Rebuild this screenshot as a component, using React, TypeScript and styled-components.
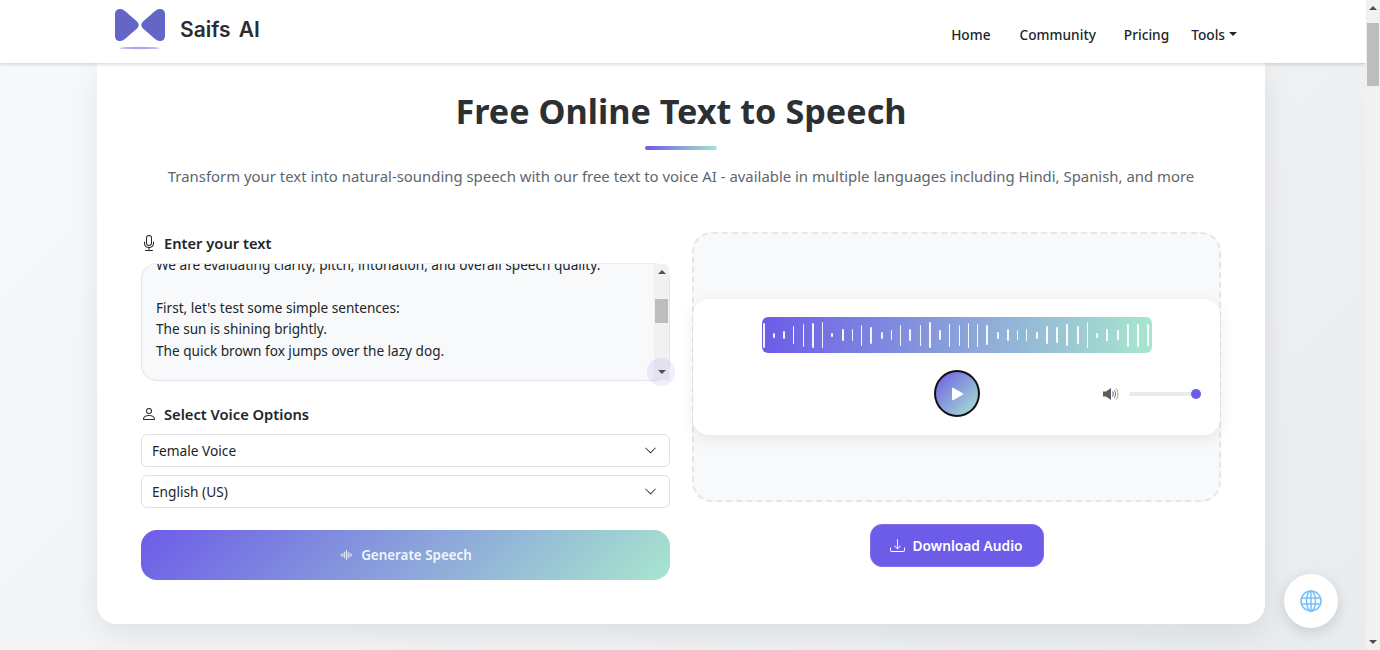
import React from 'react';
import styled, { createGlobalStyle } from 'styled-components';
import { BsChevronDown, BsDownload, BsMic, BsPerson, BsSoundwave } from 'react-icons/bs';

const BARS: [number, number][] = [
  [25, 2], [5, 2], [8, 2], [18, 1], [23, 1], [25, 2], [26, 1], [4, 2], [12, 2], [12, 1],
  [21, 1], [17, 2], [7, 2], [10, 1], [21, 1], [12, 2], [21, 1], [26, 2], [10, 2], [23, 1],
  [21, 1], [25, 1], [23, 1], [20, 2], [7, 2], [12, 2], [10, 1], [12, 1], [7, 2], [18, 2],
  [16, 2], [22, 2], [18, 2], [26, 1], [5, 2], [12, 2], [10, 2], [23, 2], [23, 2], [22, 2],
];

const GlobalStyle = createGlobalStyle`
  html, body { margin: 0; height: 100%; overflow: hidden; }
  body { font-family: "Noto Sans", "Open Sans", Arial, sans-serif; color: #212529; }
  * { box-sizing: border-box; }
`;

const Viewport = styled.div`
  display: flex;
  width: 1380px;
  height: 650px;
  overflow: hidden;
`;

const Page = styled.div`
  flex: 1;
  min-width: 0;
  display: flex;
  flex-direction: column;
  background: linear-gradient(135deg, #f8f9fa 0%, #e9ecef 100%);
`;

const Header = styled.header`
  height: 63px;
  flex: none;
  display: flex;
  align-items: flex-start;
  justify-content: space-between;
  padding: 0 129px 0 114px;
  background: #fff;
  box-shadow: 0 1px 4px rgba(0, 0, 0, 0.18);
  position: relative;
  z-index: 2;
`;

const Brand = styled.div`
  display: flex;
  align-items: center;
  gap: 12px;
  height: 52px;
  margin-top: 3px;
`;

const BrandName = styled.span`
  font-family: Inter, sans-serif;
  font-size: 21px;
  font-weight: 600;
  word-spacing: 3px;
  color: #2b2d33;
`;

const Nav = styled.nav`
  display: flex;
  align-items: center;
  height: 24px;
  margin-top: 22px;
`;

const NavLink = styled.a<{ $gap: number }>`
  font-size: 13.7px;
  font-weight: 500;
  color: #212529;
  margin-right: ${(p) => p.$gap}px;
  display: flex;
  align-items: center;
  white-space: nowrap;
`;

const Caret = styled.span`
  margin-left: 4px;
  width: 0;
  height: 0;
  border-top: 4.5px solid #212529;
  border-left: 4.5px solid transparent;
  border-right: 4.5px solid transparent;
`;

const Main = styled.main`
  flex: 1;
  padding: 0 101px 26px 97px;
  min-height: 0;
`;

const Card = styled.section`
  height: 561px;
  background: #fff;
  border-radius: 0 0 20px 20px;
  box-shadow: 0 10px 30px rgba(0, 0, 0, 0.08);
  padding: 23px 44px 0;
`;

const Title = styled.h1`
  margin: 0;
  text-align: center;
  font-size: 34.2px;
  line-height: 50px;
  font-weight: 700;
  color: #2d3033;
`;

const TitleRule = styled.div`
  width: 72px;
  height: 4px;
  margin: 10px auto 0;
  border-radius: 2px;
  background: linear-gradient(90deg, #6c5ce7, #a8e6cf);
`;

const Subtitle = styled.p`
  margin: 13px 0 0;
  text-align: center;
  font-size: 14.9px;
  line-height: 26px;
  color: #5d666e;
  white-space: nowrap;
`;

const Columns = styled.div`
  display: grid;
  grid-template-columns: 529px 529px;
  gap: 22px;
  margin-top: 42px;
`;

const Column = styled.div`
  display: flex;
  flex-direction: column;
`;

const FieldLabel = styled.div`
  display: flex;
  align-items: center;
  gap: 7px;
  height: 24px;
  font-size: 14.7px;
  font-weight: 600;
  color: #212529;
  svg { font-size: 15px; }
`;

const TextBox = styled.div`
  position: relative;
  height: 118px;
  margin-top: 8px;
  display: flex;
  background: #f8f9fa;
  border: 1px solid #e4e6e9;
  border-top-color: #eceef0;
  border-radius: 16px;
`;

const TextContent = styled.div`
  flex: 1;
  overflow: hidden;
  border-radius: 16px 0 0 16px;
  padding-left: 14px;
  font-size: 13.6px;
  line-height: 21.5px;
  color: #212529;
  white-space: pre-line;
`;

const TextInner = styled.div`
  margin-top: -10.5px;
`;

const ScrollTrack = styled.div`
  flex: none;
  width: 14px;
  background: #f1f1f1;
  display: flex;
  flex-direction: column;
  align-items: center;
`;

const InnerTrack = styled(ScrollTrack)`
  width: 15px;
  border-radius: 0 5px 0 0;
`;

const ArrowUp = styled.span`
  flex: none;
  margin: 6px 0 0;
  width: 0;
  height: 0;
  border-bottom: 4px solid #505050;
  border-left: 4px solid transparent;
  border-right: 4px solid transparent;
`;

const ArrowDown = styled.span`
  flex: none;
  margin: auto 0 6px;
  width: 0;
  height: 0;
  border-top: 4px solid #505050;
  border-left: 4px solid transparent;
  border-right: 4px solid transparent;
`;

const Thumb = styled.div<{ $top: number; $height: number }>`
  flex: none;
  width: 100%;
  margin-top: ${(p) => p.$top}px;
  height: ${(p) => p.$height}px;
  border: 1px solid #f1f1f1;
  background: #bdbdbd;
`;

const Ripple = styled.span`
  position: absolute;
  right: -6px;
  bottom: -6px;
  width: 28px;
  height: 28px;
  border-radius: 50%;
  background: rgba(108, 92, 231, 0.1);
`;

const VoiceLabel = styled(FieldLabel)`
  margin-top: 21px;
`;

const SelectBox = styled.div`
  display: flex;
  align-items: center;
  justify-content: space-between;
  height: 33px;
  margin-top: 8px;
  padding: 0 12px 0 10px;
  background: #fff;
  border: 1px solid #dee2e6;
  border-radius: 6px;
  font-size: 13.7px;
  color: #212529;
`;

const GenerateButton = styled.button`
  height: 50px;
  margin-top: 22px;
  display: flex;
  align-items: center;
  justify-content: center;
  gap: 8px;
  border: 0;
  border-radius: 16px;
  background: linear-gradient(135deg, #6c5ce7 0%, #a8e6cf 100%);
  color: rgba(255, 255, 255, 0.92);
  font-family: inherit;
  font-size: 13.4px;
  font-weight: 600;
`;

const OutputBox = styled.div`
  height: 270px;
  margin-top: 1px;
  display: flex;
  align-items: center;
  background: #f8f9fa;
  border: 2px dashed #e4e6ea;
  border-radius: 20px;
`;

const Player = styled.div`
  flex: 1;
  height: 136px;
  margin: 0 -1px;
  background: #fff;
  border-radius: 16px;
  box-shadow: 0 4px 15px rgba(0, 0, 0, 0.08);
  padding-top: 18px;
  display: flex;
  flex-direction: column;
`;

const Wave = styled.div`
  width: 390px;
  height: 36px;
  margin: 0 auto;
  border-radius: 6px;
  background: linear-gradient(90deg, #6c5ce7 0%, #a8e6cf 100%);
  display: flex;
  align-items: center;
  justify-content: space-between;
  padding: 0 2px 0 1px;
`;

const WaveBar = styled.span<{ $h: number; $w: number }>`
  width: ${(p) => p.$w}px;
  height: ${(p) => p.$h}px;
  background: rgba(255, 255, 255, 0.92);
  border-radius: 1px;
`;

const Controls = styled.div`
  display: grid;
  grid-template-columns: 1fr auto 1fr;
  align-items: center;
  margin-top: 17px;
`;

const PlayButton = styled.button`
  grid-column: 2;
  width: 46px;
  height: 47px;
  padding: 0;
  display: flex;
  align-items: center;
  justify-content: center;
  border: 2px solid #111;
  border-radius: 50%;
  background: linear-gradient(135deg, #6c5ce7 0%, #a8e6cf 100%);
`;

const Volume = styled.div`
  justify-self: end;
  display: flex;
  align-items: center;
  gap: 10px;
  padding-right: 19px;
`;

const SliderTrack = styled.div`
  position: relative;
  width: 72px;
  height: 4px;
  border-radius: 2px;
  background: #e9ecef;
`;

const SliderThumb = styled.span`
  position: absolute;
  right: 0;
  top: -3px;
  width: 10px;
  height: 10px;
  border-radius: 50%;
  background: #6c5ce7;
`;

const DownloadButton = styled.button`
  align-self: center;
  width: 174px;
  height: 43px;
  margin-top: 22px;
  padding: 0;
  display: flex;
  align-items: center;
  justify-content: center;
  gap: 7px;
  border: 1px solid #7d70ea;
  border-radius: 12px;
  background: #6c5ce7;
  color: #fff;
  font-family: inherit;
  font-size: 13.75px;
  font-weight: 600;
`;

const FloatingGlobe = styled.button`
  position: fixed;
  left: 1284px;
  top: 574px;
  width: 54px;
  height: 54px;
  padding: 0;
  display: flex;
  align-items: center;
  justify-content: center;
  border: 0;
  border-radius: 50%;
  background: #fff;
  box-shadow: 0 4px 14px rgba(0, 0, 0, 0.14);
`;

const PageScrollbar = styled(ScrollTrack)`
  height: 650px;
  position: relative;
  z-index: 3;
`;

const Logo = () => (
  <svg width="54" height="52" viewBox="0 0 54 52">
    <defs>
      <filter id="logo-shadow" x="-20%" y="-200%" width="140%" height="500%">
        <feGaussianBlur stdDeviation="0.7" />
      </filter>
    </defs>
    <path
      d="M6 6C2.500 6 1 8.500 1 11L1 33C1 36 3 38 6 38C8 38 9.500 37.200 11.500 35.500L23 25.500C25.300 23.500 25.300 20.500 23 18.500L11.500 8.500C9.500 6.800 8 6 6 6Z"
      fill="#6366c6"
    />
    <path
      d="M46 6C49.500 6 51 8.500 51 11L51 33C51 36 49 38 46 38C44 38 42.500 37.200 40.500 35.500L29 25.500C26.700 23.500 26.700 20.500 29 18.500L40.500 8.500C42.500 6.800 44 6 46 6Z"
      fill="#6366c6"
    />
    <ellipse cx="25.500" cy="45" rx="20" ry="1.200" fill="#a9aaee" filter="url(#logo-shadow)" />
  </svg>
);

const VolumeIcon = () => (
  <svg width="16" height="14" viewBox="0 0 16 14">
    <path d="M0 4.500h3L8 1v12L3 9.500H0z" fill="#5b5b5b" />
    <path d="M9.500 4.500c1 1.500 1 3.500 0 5" fill="none" stroke="#555" strokeWidth="1" />
    <path d="M11.300 3c1.700 2.500 1.700 5.500 0 8" fill="none" stroke="#4a87b5" strokeWidth="1" />
    <path d="M13.200 1.500c2.400 3.400 2.400 7.600 0 11" fill="none" stroke="#c79a5c" strokeWidth="1" />
  </svg>
);

const GlobeIcon = () => (
  <svg width="22" height="22" viewBox="0 0 22 22" fill="none" stroke="#74c0fc" strokeWidth="1.500">
    <circle cx="11" cy="11" r="10" />
    <ellipse cx="11" cy="11" rx="4.500" ry="10" />
    <path d="M11 1v20M1.500 8h19M1.500 14h19" />
  </svg>
);

export default function App() {
  return (
    <Viewport>
      <GlobalStyle />
      <Page>
        <Header>
          <Brand>
            <Logo />
            <BrandName>Saifs AI</BrandName>
          </Brand>
          <Nav>
            <NavLink $gap={29}>Home</NavLink>
            <NavLink $gap={28}>Community</NavLink>
            <NavLink $gap={22}>Pricing</NavLink>
            <NavLink $gap={0}>
              Tools
              <Caret />
            </NavLink>
          </Nav>
        </Header>
        <Main>
          <Card>
            <Title>Free Online Text to Speech</Title>
            <TitleRule />
            <Subtitle>
              Transform your text into natural-sounding speech with our free text to voice AI - available in multiple
              languages including Hindi, Spanish, and more
            </Subtitle>
            <Columns>
              <Column>
                <FieldLabel>
                  <BsMic size={16} />
                  Enter your text
                </FieldLabel>
                <TextBox>
                  <TextContent>
                    <TextInner>
                      {`We are evaluating clarity, pitch, intonation, and overall speech quality.

First, let's test some simple sentences:
The sun is shining brightly.
The quick brown fox jumps over the lazy dog.`}
                    </TextInner>
                  </TextContent>
                  <InnerTrack>
                    <ArrowUp />
                    <Thumb $top={24} $height={26} />
                    <ArrowDown />
                  </InnerTrack>
                  <Ripple />
                </TextBox>
                <VoiceLabel>
                  <BsPerson size={16} />
                  Select Voice Options
                </VoiceLabel>
                <SelectBox>
                  Female Voice
                  <BsChevronDown size={13} />
                </SelectBox>
                <SelectBox>
                  English (US)
                  <BsChevronDown size={13} />
                </SelectBox>
                <GenerateButton>
                  <BsSoundwave size={14} />
                  Generate Speech
                </GenerateButton>
              </Column>
              <Column>
                <OutputBox>
                  <Player>
                    <Wave>
                      {BARS.map(([h, w], i) => (
                        <WaveBar key={i} $h={h} $w={w} />
                      ))}
                    </Wave>
                    <Controls>
                      <PlayButton>
                        <svg width="14" height="14" viewBox="0 0 14 14">
                          <path d="M2 1.500v11a.8.8 0 0 0 1.200.7l9.500-5.500a.8.8 0 0 0 0-1.400L3.200.8A.8.8 0 0 0 2 1.500z" fill="#fff" />
                        </svg>
                      </PlayButton>
                      <Volume>
                        <VolumeIcon />
                        <SliderTrack>
                          <SliderThumb />
                        </SliderTrack>
                      </Volume>
                    </Controls>
                  </Player>
                </OutputBox>
                <DownloadButton>
                  <BsDownload size={15} />
                  Download Audio
                </DownloadButton>
              </Column>
            </Columns>
          </Card>
        </Main>
      </Page>
      <PageScrollbar>
        <ArrowUp />
        <Thumb $top={12} $height={65} />
        <ArrowDown />
      </PageScrollbar>
      <FloatingGlobe>
        <GlobeIcon />
      </FloatingGlobe>
    </Viewport>
  );
}
